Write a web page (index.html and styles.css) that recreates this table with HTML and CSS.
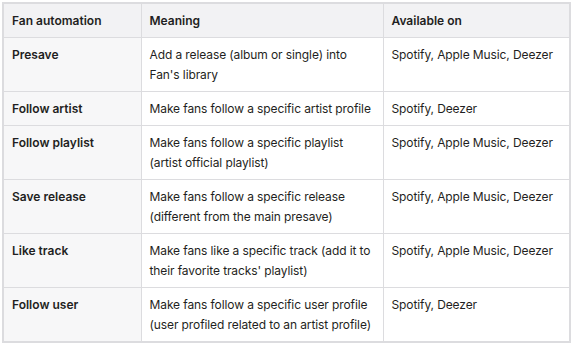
FILE: index.html
```html
<!DOCTYPE html>
<html lang="en">
<head>
    <meta charset="UTF-8">
    <title>Fan automations</title>
    <link rel="stylesheet" href="styles.css">
</head>
<body>

<table class="automations">
    <thead>
        <tr>
            <th class="col-name">Fan automation</th>
            <th class="col-meaning">Meaning</th>
            <th>Available on</th>
        </tr>
    </thead>
    <tbody>
        <tr>
            <th>Presave</th>
            <td>Add a release (album or single) into<br>Fan's library</td>
            <td>Spotify, Apple Music, Deezer</td>
        </tr>
        <tr>
            <th>Follow artist</th>
            <td>Make fans follow a specific artist profile</td>
            <td>Spotify, Deezer</td>
        </tr>
        <tr>
            <th>Follow playlist</th>
            <td>Make fans follow a specific playlist<br>(artist official playlist)</td>
            <td>Spotify, Apple Music, Deezer</td>
        </tr>
        <tr>
            <th>Save release</th>
            <td>Make fans follow a specific release<br>(different from the main presave)</td>
            <td>Spotify, Apple Music, Deezer</td>
        </tr>
        <tr>
            <th>Like track</th>
            <td>Make fans like a specific track (add it to<br>their favorite tracks' playlist)</td>
            <td>Spotify, Apple Music, Deezer</td>
        </tr>
        <tr>
            <th>Follow user</th>
            <td>Make fans follow a specific user profile<br>(user profiled related to an artist profile)</td>
            <td>Spotify, Deezer</td>
        </tr>
    </tbody>
</table>

</body>
</html>
```
FILE: styles.css
```css
:root {
    --text-color: #1f1f22;
    --border-color: #dcdcdf;
    --head-bg: #f2f2f4;
    --name-bg: #f7f7f8;
    --font-family: 'Inter', 'Noto Sans', sans-serif;
}

* {
    box-sizing: border-box;
}

body {
    margin: 2px;
    font-family: var(--font-family);
    font-size: 12px;
    line-height: 20px;
    color: var(--text-color);
    background: #ffffff;
}

.automations {
    width: 569px;
    border-collapse: collapse;
    table-layout: fixed;
    border: 2px solid var(--border-color);
}

.automations th,
.automations td {
    padding: 7px 4px 6px 8px;
    border: 1px solid var(--border-color);
    text-align: left;
    vertical-align: top;
}

.automations th {
    font-weight: 600;
}

.automations thead th {
    background: var(--head-bg);
}

.automations tbody th {
    background: var(--name-bg);
}

.automations td {
    font-weight: 400;
    letter-spacing: -0.1px;
    white-space: nowrap;
}

.col-name {
    width: 138px;
}

.col-meaning {
    width: 242px;
}
```
